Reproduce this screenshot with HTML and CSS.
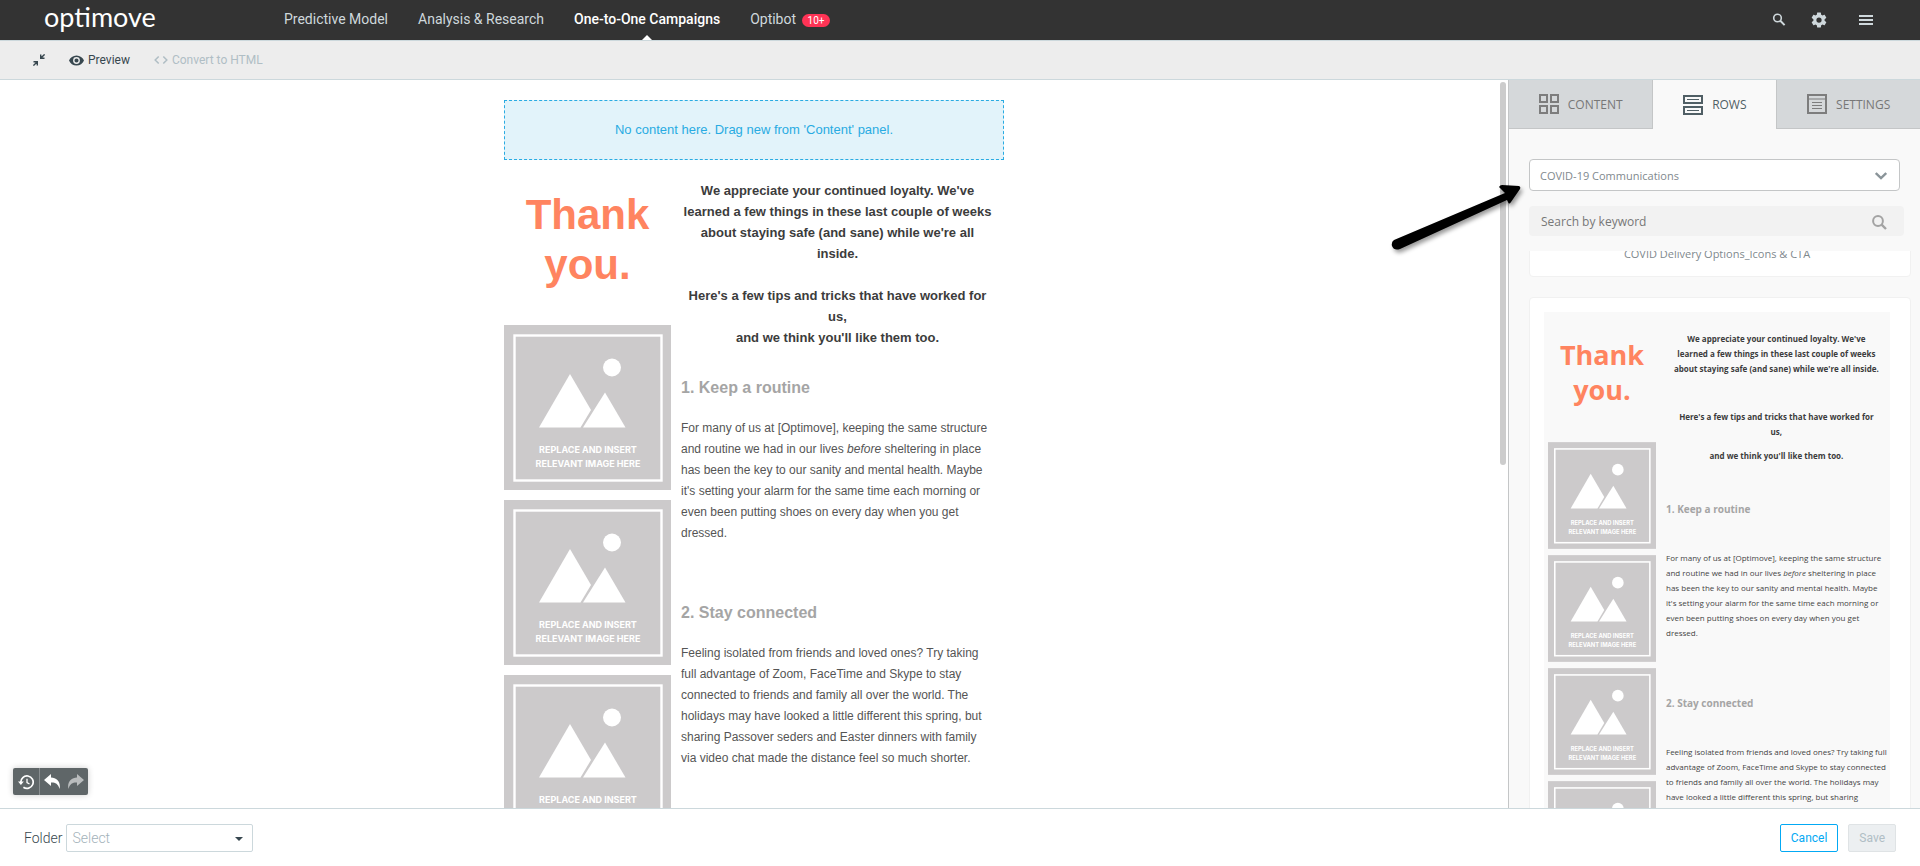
FILE: index.html
```html
<!DOCTYPE html>
<html lang="en">

<head>
    <meta charset="UTF-8">
    <meta name="viewport" content="width=device-width, initial-scale=1.0">
    <title>Optimove - One-to-One Campaigns</title>
    <link rel="stylesheet" href="styles.css">
</head>

<body>
    <!-- shared placeholder picture -->
    <svg class="defs" width="0" height="0" aria-hidden="true">
        <symbol id="placeholder" viewBox="0 0 167 165">
            <rect width="167" height="165" fill="#cccacb"/>
            <rect x="10.5" y="10.5" width="147" height="145" fill="none" stroke="#fff" stroke-width="2.4"/>
            <circle cx="108" cy="42.5" r="9" fill="#fff"/>
            <path d="M66 49 L87 85 L76.5 102.5 H35 Z" fill="#fff"/>
            <path d="M101 67.5 L121.5 102.5 H79 Z" fill="#fff"/>
            <text x="84" y="128" text-anchor="middle" class="ph-text">REPLACE AND INSERT</text>
            <text x="84" y="142" text-anchor="middle" class="ph-text">RELEVANT IMAGE HERE</text>
        </symbol>
    </svg>

    <header class="topbar">
        <a href="#" class="logo">optimove</a>
        <nav class="nav">
            <a href="#">Predictive Model</a>
            <a href="#">Analysis &amp; Research</a>
            <a href="#" class="active">One-to-One Campaigns</a>
            <a href="#">Optibot <span class="badge">10+</span></a>
        </nav>
        <div class="top-icons">
            <button type="button" aria-label="Search">
                <svg width="14" height="14" viewBox="0 0 14 14" fill="none" stroke="#cfd8dc"><circle cx="5.5" cy="5" r="3.8" stroke-width="1.6"/><path d="M8.3 7.8 L12.6 12.1" stroke-width="2"/></svg>
            </button>
            <button type="button" aria-label="Settings">
                <svg width="18" height="18" viewBox="0 0 24 24" fill="#cfd8dc"><path d="M19.43 12.98c.04-.32.07-.64.07-.98s-.03-.66-.07-.98l2.11-1.65c.19-.15.24-.42.12-.64l-2-3.46c-.12-.22-.39-.3-.61-.22l-2.49 1c-.52-.4-1.08-.73-1.69-.98l-.38-2.65A.49.49 0 0 0 14 2h-4c-.25 0-.46.18-.49.42l-.38 2.65c-.61.25-1.17.59-1.69.98l-2.49-1c-.23-.09-.49 0-.61.22l-2 3.46c-.13.22-.07.49.12.64l2.11 1.65c-.04.32-.07.65-.07.98s.03.66.07.98l-2.11 1.65c-.19.15-.24.42-.12.64l2 3.46c.12.22.39.3.61.22l2.49-1c.52.4 1.08.73 1.69.98l.38 2.65c.03.24.24.42.49.42h4c.25 0 .46-.18.49-.42l.38-2.65c.61-.25 1.17-.59 1.69-.98l2.49 1c.23.09.49 0 .61-.22l2-3.46c.12-.22.07-.49-.12-.64l-2.11-1.65zM12 15.5a3.5 3.5 0 1 1 0-7 3.5 3.5 0 0 1 0 7z"/></svg>
            </button>
            <button type="button" aria-label="Menu">
                <svg width="14" height="10" viewBox="0 0 14 10" fill="#cfd8dc"><path d="M0 0h14v2H0zM0 4h14v2H0zM0 8h14v2H0z"/></svg>
            </button>
        </div>
    </header>

    <div class="toolbar">
        <button type="button" class="collapse" aria-label="Collapse">
            <svg width="12" height="12" viewBox="0 0 12 12" fill="none" stroke="#37474f" stroke-width="1.4"><path d="M7.7 0.5 V4.3 H11.5 M7.7 4.3 L11.6 0.4 M0.5 7.7 H4.3 V11.5 M4.3 7.7 L0.4 11.6"/></svg>
        </button>
        <button type="button">
            <svg width="15" height="11" viewBox="0 0 22 15"><path fill="#37474f" d="M11 0C6 0 1.730 3.110 0 7.500 1.730 11.890 6 15 11 15s9.270-3.110 11-7.500C20.270 3.110 16 0 11 0zm0 12.500a5 5 0 1 1 0-10 5 5 0 0 1 0 10zm0-8a3 3 0 1 0 0 6 3 3 0 0 0 0-6z"/></svg>
            Preview
        </button>
        <button type="button" class="convert" disabled>
            <svg width="14" height="8" viewBox="0 0 14 8" fill="none" stroke="#b0bec5" stroke-width="1.5"><path d="M4.700 0.500 L1.200 4 L4.700 7.500 M9.300 0.500 L12.800 4 L9.300 7.500"/></svg>
            Convert to HTML
        </button>
    </div>

    <main class="workspace">
        <section class="canvas">
            <div class="email">
                <div class="drop-zone">No content here. Drag new from 'Content' panel.</div>
                <div class="email-row">
                    <div class="email-left">
                        <h1>Thank you.</h1>
                        <svg class="picture"><use href="#placeholder"/></svg>
                        <svg class="picture"><use href="#placeholder"/></svg>
                        <svg class="picture"><use href="#placeholder"/></svg>
                    </div>
                    <div class="email-right">
                        <p class="intro">We appreciate your continued loyalty. We've learned a few things in these last couple of weeks about staying safe (and sane) while we're all inside.</p>
                        <p class="intro">Here's a few tips and tricks that have worked for us,<br>and we think you'll like them too.</p>
                        <h2>1. Keep a routine</h2>
                        <p>For many of us at [Optimove], keeping the same structure and routine we had in our lives <em>before</em> sheltering in place has been the key to our sanity and mental health. Maybe it's setting your alarm for the same time each morning or even been putting shoes on every day when you get dressed.</p>
                        <h2>2. Stay connected</h2>
                        <p>Feeling isolated from friends and loved ones? Try taking full advantage of Zoom, FaceTime and Skype to stay connected to friends and family all over the world. The holidays may have looked a little different this spring, but sharing Passover seders and Easter dinners with family via video chat made the distance feel so much shorter.</p>
                    </div>
                </div>
            </div>
            <div class="scroll-thumb"></div>
            <div class="history">
                <button type="button" aria-label="History">
                    <svg width="16" height="16" viewBox="0 0 16 16" fill="none" stroke="#fff"><path d="M2.800 8.500 A6.200 6.200 0 1 1 5.400 13.200" stroke-width="1.700"/><path d="M9 4.800 V8.600 L11.500 10" stroke-width="1.300"/><path d="M0 7.500 H5.800 L2.900 11 Z" fill="#fff" stroke="none"/></svg>
                </button>
                <button type="button" aria-label="Undo">
                    <svg width="16" height="15" viewBox="0 0 16 15" fill="#fff"><path d="M7 0 L0 6 L7 12 V8.500 C11 8.300 14 9.500 15.600 15 C17 8 13 3.800 7 3.500 Z"/></svg>
                </button>
                <button type="button" aria-label="Redo" disabled>
                    <svg width="16" height="15" viewBox="0 0 16 15" fill="#b9bcbd"><path d="M9 0 L16 6 L9 12 V8.500 C5 8.300 2 9.500 0.400 15 C-1 8 3 3.800 9 3.500 Z"/></svg>
                </button>
            </div>
        </section>

        <aside class="panel">
            <div class="tabs">
                <button type="button">
                    <svg width="20" height="20" viewBox="0 0 20 20" fill="none" stroke="#7d7d7d" stroke-width="2"><path d="M1 1h7v7H1zM12 1h7v7h-7zM1 12h7v7H1zM12 12h7v7h-7z"/></svg>
                    CONTENT
                </button>
                <button type="button" class="selected">
                    <svg width="20" height="20" viewBox="0 0 20 20" fill="none" stroke="#505f65"><path d="M1 1h18v7H1zM1 12h18v7H1z" stroke-width="2"/><path d="M4 4.500h12M4 15.500h12" stroke-width="1.200"/></svg>
                    ROWS
                </button>
                <button type="button">
                    <svg width="20" height="20" viewBox="0 0 20 20" fill="none" stroke="#7d7d7d"><path d="M1 1h18v18H1z" stroke-width="2"/><path d="M1 5h18M5 8.500h10M5 11.500h10M5 14.500h10" stroke-width="1.200"/></svg>
                    SETTINGS
                </button>
            </div>

            <div class="select-box">
                <select aria-label="Row category">
                    <option>COVID-19 Communications</option>
                </select>
                <svg width="12" height="8" viewBox="0 0 12 8" fill="none" stroke="#8a9499" stroke-width="2.400"><path d="M0.800 1 L6 6 L11.200 1"/></svg>
            </div>

            <div class="search-box">
                <input type="text" placeholder="Search by keyword" aria-label="Search by keyword">
                <svg width="15" height="15" viewBox="0 0 15 15" fill="none" stroke="#a3a3a3"><circle cx="6" cy="6" r="4.900" stroke-width="2"/><path d="M9.600 9.600 L14 14" stroke-width="2.400"/></svg>
            </div>

            <div class="row-list">
                <div class="card card-caption">COVID Delivery Options_Icons &amp; CTA</div>
                <div class="card">
                    <div class="thumb">
                        <div class="thumb-left">
                            <h3>Thank you.</h3>
                            <svg class="thumb-picture"><use href="#placeholder"/></svg>
                            <svg class="thumb-picture"><use href="#placeholder"/></svg>
                            <svg class="thumb-picture"><use href="#placeholder"/></svg>
                            <svg class="thumb-picture"><use href="#placeholder"/></svg>
                        </div>
                        <div class="thumb-right">
                            <p class="thumb-intro">We appreciate your continued loyalty. We've<br>learned a few things in these last couple of weeks<br>about staying safe (and sane) while we're all inside.</p>
                            <p class="thumb-intro tips">Here's a few tips and tricks that have worked for<br>us,</p>
                            <p class="thumb-intro">and we think you'll like them too.</p>
                            <h4>1. Keep a routine</h4>
                            <p>For many of us at [Optimove], keeping the same structure<br>and routine we had in our lives <em>before</em> sheltering in place<br>has been the key to our sanity and mental health. Maybe<br>it's setting your alarm for the same time each morning or<br>even been putting shoes on every day when you get<br>dressed.</p>
                            <h4>2. Stay connected</h4>
                            <p>Feeling isolated from friends and loved ones? Try taking full<br>advantage of Zoom, FaceTime and Skype to stay connected<br>to friends and family all over the world. The holidays may<br>have looked a little different this spring, but sharing<br>Passover seders and Easter dinners with family via video<br>chat made the distance feel so much shorter.</p>
                        </div>
                    </div>
                </div>
            </div>
        </aside>

        <!-- callout arrow pointing at the category select -->
        <svg class="callout" width="140" height="76" viewBox="0 0 140 76">
            <path d="M6 60 L117 13 L111 7 Q112 5 114 5 L131 6 Q133 7 132 9 L123 22 Q121 25 120 22 L119 20 L12 69 Q6 71 4 66 Q3 62 6 60 Z"/>
        </svg>
    </main>

    <footer class="footer">
        <label for="folder">Folder</label>
        <div class="folder-box">
            <select id="folder">
                <option>Select</option>
            </select>
            <svg width="8" height="4" viewBox="0 0 8 4" fill="#37474f"><path d="M0 0h8L4 4z"/></svg>
        </div>
        <button type="button" class="cancel">Cancel</button>
        <button type="button" class="save" disabled>Save</button>
    </footer>
</body>

</html>
```

FILE: styles.css
```css
* {
    box-sizing: border-box;
}

body {
    margin: 0;
    height: 100vh;
    display: flex;
    flex-direction: column;
    font-family: Roboto, sans-serif;
    color: #37474f;
    background-color: #fff;
    overflow: hidden;
}

h1, h2, h3, h4, p {
    margin: 0;
}

svg {
    flex: none;
    display: block;
}

button {
    font-family: inherit;
    border: none;
    background: none;
    padding: 0;
    cursor: pointer;
}

select,
input {
    width: 100%;
    height: 100%;
    appearance: none;
    background: none;
    border: none;
    font-family: inherit;
}

.defs {
    position: absolute;
}

.ph-text {
    font-family: Inter, sans-serif;
    font-size: 9px;
    font-weight: 700;
    fill: #fff;
}

/* top bar */
.topbar {
    height: 40px;
    flex: none;
    display: flex;
    background-color: #333;
    padding: 0 47px 0 44px;
}

.logo {
    width: 240px;
    font-family: Lato, sans-serif;
    font-size: 27px;
    line-height: 34px;
    color: #fff;
    text-decoration: none;
}

.nav {
    display: flex;
    gap: 30px;
}

.nav a {
    position: relative;
    font-size: 14px;
    line-height: 38px;
    color: #cfd8dc;
    text-decoration: none;
}

.nav a.active {
    color: #fff;
    font-weight: 500;
}

.nav a.active::after {
    content: "";
    position: absolute;
    left: 50%;
    bottom: 0;
    margin-left: -5px;
    border: 5px solid transparent;
    border-top: none;
    border-bottom-color: #fff;
}

.badge {
    display: inline-block;
    margin-left: 2px;
    padding: 0 6px;
    border-radius: 7px;
    font-size: 10px;
    line-height: 13px;
    color: #fff;
    background-color: #ff3355;
}

.top-icons {
    margin-left: auto;
    display: flex;
    align-items: center;
    gap: 24px;
}

.top-icons button:last-child {
    margin-left: 7px;
}

/* toolbar */
.toolbar {
    height: 40px;
    flex: none;
    display: flex;
    align-items: center;
    gap: 24px;
    padding-left: 33px;
    background-color: #ededed;
    border-top: 1px solid #ccd8dc;
    border-bottom: 1px solid #ccd8dc;
}

.toolbar button {
    display: flex;
    align-items: center;
    gap: 4px;
    font-size: 12px;
    color: #37474f;
}

.toolbar .convert {
    color: #b0bec5;
}

/* workspace */
.workspace {
    flex: 1;
    min-height: 0;
    display: flex;
    position: relative;
}

.canvas {
    flex: 1;
    position: relative;
    overflow: hidden;
    padding-top: 20px;
    font-family: "Liberation Sans", Arial, sans-serif;
}

.email {
    width: 500px;
    margin: 0 auto;
}

.drop-zone {
    border: 1px dashed #29abe2;
    background-color: #e2f3fa;
    color: #29abe2;
    font-size: 13px;
    line-height: 58px;
    text-align: center;
}

.email-row {
    display: flex;
}

.email-left {
    width: 167px;
    display: flex;
    flex-direction: column;
    gap: 10px;
}

.email-left h1 {
    padding: 30px 10px 25px;
    font-size: 42px;
    line-height: 50px;
    color: #ff8460;
    text-align: center;
}

.picture {
    width: 167px;
    height: 165px;
}

.email-right {
    flex: 1;
    padding: 20px 10px;
}

.email-right p {
    font-size: 12px;
    line-height: 21px;
    color: #555;
}

.email-right .intro {
    margin-bottom: 21px;
    font-size: 13px;
    font-weight: bold;
    color: #3c3c3c;
    text-align: center;
}

.email-right h2 {
    padding: 9px 0 20px;
    font-size: 16px;
    line-height: 20px;
    color: #a5a5a5;
}

.email-right p + h2 {
    margin-top: 50px;
}

.email-right .intro + h2 {
    margin-top: 0;
}

.scroll-thumb {
    position: absolute;
    top: 2px;
    right: 2px;
    width: 6px;
    height: 383px;
    border-radius: 3px;
    background-color: #ccc;
}

.history {
    position: absolute;
    left: 13px;
    bottom: 13px;
    height: 27px;
    display: flex;
    border-radius: 2px;
    background-color: #5f6668;
    box-shadow: 0 0 6px rgba(0, 0, 0, 0.2);
}

.history button {
    width: 24px;
    display: flex;
    align-items: center;
    justify-content: center;
}

.history button:first-child {
    width: 27px;
    border-right: 1px solid #8a8f91;
}

/* side panel */
.panel {
    width: 412px;
    flex: none;
    display: flex;
    flex-direction: column;
    border-left: 1px solid #c4c6c7;
    background-color: #f9f9f9;
    font-family: "Open Sans", sans-serif;
}

.tabs {
    flex: none;
    height: 49px;
    display: flex;
}

.tabs button {
    flex: 1 1 auto;
    display: flex;
    align-items: center;
    justify-content: center;
    gap: 9px;
    font-size: 12px;
    color: #777;
    background-color: #d5d8da;
    border-bottom: 1px solid #c4c6c7;
}

.tabs .selected {
    color: #505f65;
    background-color: #f9f9f9;
    border: 1px solid #c4c6c7;
    border-width: 0 1px;
}

.select-box {
    position: relative;
    flex: none;
    height: 32px;
    margin: 30px 20px 15px;
    background-color: #fff;
    border: 1px solid #c4c6c7;
    border-radius: 4px;
}

.select-box select {
    padding: 0 10px;
    font-size: 11px;
    color: #7f898e;
}

.select-box svg {
    position: absolute;
    right: 12px;
    top: 12px;
}

.search-box {
    position: relative;
    flex: none;
    height: 30px;
    margin: 0 16px 15px 20px;
    background-color: #f2f2f2;
    border-radius: 4px;
}

.search-box input {
    padding: 0 12px;
    font-size: 12px;
}

.search-box input::placeholder {
    color: #777;
}

.search-box svg {
    position: absolute;
    right: 17px;
    top: 9px;
}

.row-list {
    flex: 1;
    min-height: 0;
    overflow: hidden;
    padding: 0 9px 0 20px;
}

.card {
    margin-bottom: 20px;
    padding: 14px 20px 20px 14px;
    background-color: #fff;
    border: 1px solid #f1f1f1;
    border-radius: 4px;
}

/* list is scrolled past the first card */
.card-caption {
    margin-top: -21px;
    font-size: 11px;
    line-height: 17px;
    text-align: center;
    color: #7f898e;
    padding-bottom: 14px;
}

.thumb {
    display: flex;
    padding: 0 7px 0 4px;
    background-color: #f9f9f9;
}

.thumb-left {
    width: 108px;
    flex: none;
    display: flex;
    flex-direction: column;
    gap: 6px;
}

.thumb-left h3 {
    padding: 25px 10px 29px;
    font-size: 27px;
    line-height: 35px;
    color: #ff8460;
    text-align: center;
}

.thumb-picture {
    width: 108px;
    height: 107px;
}

.thumb-right {
    flex: 1;
    padding: 19px 0 20px 10px;
}

.thumb-right p {
    font-size: 8px;
    line-height: 15px;
    color: #444;
    white-space: nowrap;
}

.thumb-right .thumb-intro {
    font-weight: bold;
    color: #3c3c3c;
    text-align: center;
}

.thumb-right .tips {
    margin: 33px 0 9px;
}

.thumb-right h4 {
    padding: 54px 0 32px;
    font-size: 10px;
    line-height: 18px;
    color: #a5a5a5;
}

.thumb-right .thumb-intro + h4 {
    padding-top: 37px;
}

.callout {
    position: absolute;
    right: 392px;
    top: 100px;
    filter: drop-shadow(2px 3px 2px rgba(0, 0, 0, 0.4));
}

/* footer */
.footer {
    flex: none;
    height: 58px;
    display: flex;
    align-items: center;
    padding: 0 24px;
    border-top: 1px solid #ccd8dc;
}

.footer label {
    font-size: 14px;
    font-weight: 300;
    margin-right: 4px;
}

.folder-box {
    position: relative;
    width: 187px;
    height: 28px;
    border: 1px solid #ccd8dc;
    border-radius: 2px;
}

.folder-box select {
    padding: 0 5px;
    font-size: 14px;
    font-weight: 300;
    color: #a3b2ba;
}

.folder-box svg {
    position: absolute;
    right: 9px;
    top: 12px;
}

.footer button {
    height: 28px;
    padding: 0 10px;
    font-size: 12px;
    border-radius: 2px;
}

.footer .cancel {
    margin-left: auto;
    margin-right: 10px;
    color: #03a9f4;
    border: 1px solid #03a9f4;
}

.footer .save {
    color: #b0bec5;
    background-color: #eceff1;
    border: 1px solid #dfe3e5;
}
```
